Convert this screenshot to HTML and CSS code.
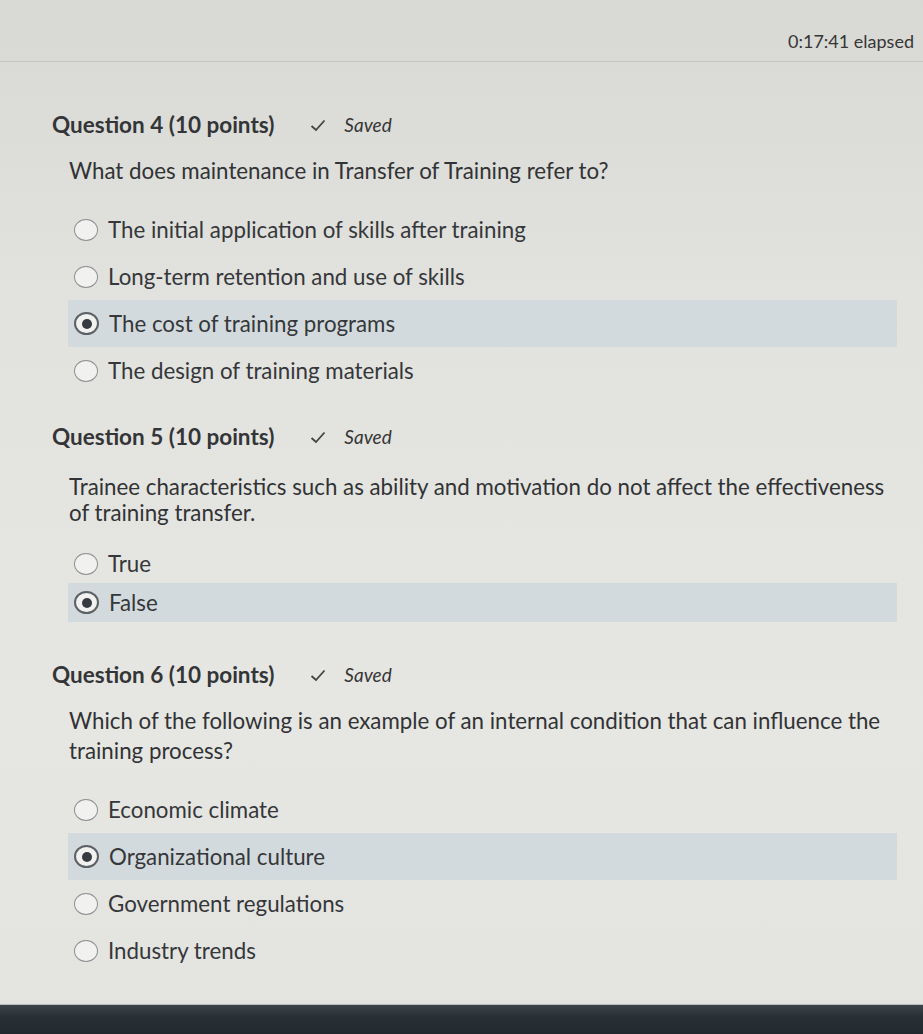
FILE: index.html
```html
<!DOCTYPE html>
<html lang="en">
<head>
    <meta charset="UTF-8">
    <meta name="viewport" content="width=device-width, initial-scale=1.0">
    <title>Quiz</title>
    <link rel="stylesheet" href="styles.css">
</head>
<body>

<header class="topbar">
    <span class="timer">0:17:41 elapsed</span>
</header>

<main class="quiz">
    <section class="question">
        <h2 class="q-title">Question 4 (10 points)
            <span class="saved">
                <svg width="16" height="13" viewBox="0 0 16 13"><path d="M1.5 7 L6 11 L14.5 1.5" fill="none" stroke="#444" stroke-width="1.8"/></svg>
                Saved
            </span>
        </h2>
        <p class="q-text">What does maintenance in Transfer of Training refer to?</p>
        <ul class="options">
            <li class="option"><span class="radio"></span>The initial application of skills after training</li>
            <li class="option"><span class="radio"></span>Long-term retention and use of skills</li>
            <li class="option selected"><span class="radio"></span>The cost of training programs</li>
            <li class="option"><span class="radio"></span>The design of training materials</li>
        </ul>
    </section>

    <section class="question">
        <h2 class="q-title">Question 5 (10 points)
            <span class="saved">
                <svg width="16" height="13" viewBox="0 0 16 13"><path d="M1.5 7 L6 11 L14.5 1.5" fill="none" stroke="#444" stroke-width="1.8"/></svg>
                Saved
            </span>
        </h2>
        <p class="q-text tight">Trainee characteristics such as ability and motivation do not affect the effectiveness of training transfer.</p>
        <ul class="options short">
            <li class="option"><span class="radio"></span>True</li>
            <li class="option selected"><span class="radio"></span>False</li>
        </ul>
    </section>

    <section class="question">
        <h2 class="q-title">Question 6 (10 points)
            <span class="saved">
                <svg width="16" height="13" viewBox="0 0 16 13"><path d="M1.5 7 L6 11 L14.5 1.5" fill="none" stroke="#444" stroke-width="1.8"/></svg>
                Saved
            </span>
        </h2>
        <p class="q-text">Which of the following is an example of an internal condition that can influence the training process?</p>
        <ul class="options">
            <li class="option"><span class="radio"></span>Economic climate</li>
            <li class="option selected"><span class="radio"></span>Organizational culture</li>
            <li class="option"><span class="radio"></span>Government regulations</li>
            <li class="option"><span class="radio"></span>Industry trends</li>
        </ul>
    </section>
</main>

<footer class="bottombar"></footer>

</body>
</html>
```

FILE: styles.css
```css
body {
    font-family: Lato, "Open Sans", sans-serif;
    margin: 0;
    padding: 0;
    height: 100vh;
    display: flex;
    flex-direction: column;
    color: #333537;
    background: linear-gradient(180deg, #d8d8d4 0%, #e2e2de 30%, #e6e6e2 70%, #e3e3df 100%);
    overflow: hidden;
}

.topbar {
    height: 61px;
    display: flex;
    justify-content: flex-end;
    padding: 0 9px 0 0;
    border-bottom: 1px solid #c4c4c0;
}

.timer {
    font-size: 18px;
    line-height: 22px;
    margin-top: 30px;
    color: #363636;
}

.quiz {
    padding: 0 26px 0 52px;
}

.question {
    margin-top: 29px;
}

.question:first-child {
    margin-top: 49px;
}

.q-title {
    font-size: 22.5px;
    font-weight: bold;
    line-height: 28px;
    margin: 0;
    color: #333537;
    display: flex;
    align-items: center;
}

.saved {
    font-size: 19px;
    font-weight: normal;
    font-style: italic;
    margin-left: 36px;
    display: flex;
    align-items: center;
    gap: 18px;
    color: #363636;
}

.q-text {
    font-size: 22.3px;
    line-height: 30px;
    margin: 17px 0 20px 17px;
    color: #313335;
}

.q-text.tight {
    line-height: 26px;
    margin: 23px 0 18px 17px;
}

.options {
    list-style-type: none;
    margin: 0;
    padding: 0 0 0 16px;
}

.options.short {
    padding-bottom: 10px;
}

.option {
    height: 47px;
    display: flex;
    align-items: center;
    padding-left: 6px;
    font-size: 22.3px;
    color: #35373a;
}

.options.short .option {
    height: 39px;
}

.option.selected {
    background-color: #d3dadd;
}

.radio {
    width: 22px;
    height: 20px;
    border: 1.5px solid #8d8f90;
    border-radius: 50%;
    background-color: #f1f1ef;
    margin-right: 10px;
    display: flex;
    align-items: center;
    justify-content: center;
    flex-shrink: 0;
}

.selected .radio {
    border: 2px solid #5c6165;
    width: 21px;
    height: 19px;
}

.selected .radio::after {
    content: "";
    width: 10px;
    height: 10px;
    border-radius: 50%;
    background-color: #353b40;
}

.bottombar {
    margin-top: auto;
    height: 29px;
    background: linear-gradient(180deg, #3c454b 0%, #283036 40%, #232a2f 100%);
    border-top: 1px solid #b9bdbf;
}
```
